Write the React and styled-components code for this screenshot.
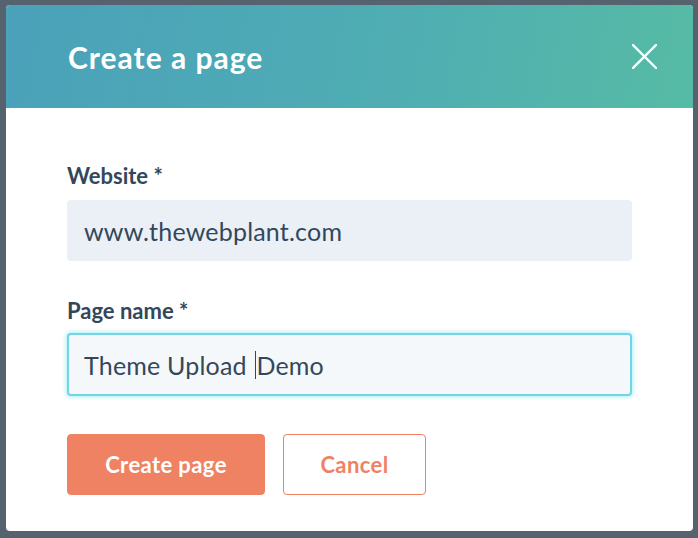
import * as React from 'react';
import styled, { createGlobalStyle } from 'styled-components';

const GlobalStyle = createGlobalStyle`
	html, body {
		margin: 0;
		padding: 0;
		background: #56636f;
	}
	body {
		font-family: Lato, "Noto Sans", sans-serif;
		-webkit-font-smoothing: antialiased;
	}
`;

const Backdrop = styled.div`
	width: 698px;
	height: 538px;
	box-sizing: border-box;
	padding: 5px 5px 7px 6px;
	background: #56636f;
`;

const Modal = styled.div`
	display: flex;
	flex-direction: column;
	width: 687px;
	height: 526px;
	border-radius: 4px;
	overflow: hidden;
	background: #fff;
`;

const Header = styled.div`
	display: flex;
	align-items: center;
	justify-content: space-between;
	height: 103px;
	flex-shrink: 0;
	padding: 0 36px 0 62px;
	box-sizing: border-box;
	background: linear-gradient(100deg, #4aa1ba 0%, #4fadb3 55%, #56bba5 100%);
`;

const Title = styled.h1`
	margin: 0;
	color: #fff;
	font-size: 30px;
	font-weight: 700;
	letter-spacing: 1px;
`;

const CloseButton = styled.button`
	display: flex;
	padding: 0;
	border: 0;
	background: none;
	color: #fff;
	cursor: pointer;
`;

const Body = styled.div`
	display: flex;
	flex-direction: column;
	padding: 55px 61px 36px 61px;
`;

const Field = styled.div`
	display: flex;
	flex-direction: column;
	margin-bottom: ${props => props.last ? '38px' : '37px'};
`;

const Label = styled.label`
	color: #33475b;
	font-size: 22px;
	font-weight: 700;
	line-height: 26px;
	margin-bottom: ${props => props.tight ? '9px' : '11px'};
`;

const Input = styled.div`
	display: flex;
	align-items: center;
	height: ${props => props.focused ? '63px' : '61px'};
	box-sizing: border-box;
	border-radius: 4px;
	padding: 0 ${props => props.focused ? '15px' : '17px'};
	color: #33475b;
	font-size: 25px;
	letter-spacing: 0.2px;
	white-space: pre;
	background: ${props => props.focused ? '#f5f8fa' : '#eaf0f6'};
	border: ${props => props.focused ? '2px solid #74d3e4' : '0'};
	box-shadow: ${props => props.focused ? '0 0 4px 1px rgba(0, 208, 228, 0.35)' : 'none'};
`;

const Caret = styled.span`
	display: inline-block;
	width: 1px;
	height: 28px;
	background: #33475b;
	margin: 0 0 0 2px;
`;

const Actions = styled.div`
	display: flex;
	gap: 18px;
`;

const Button = styled.button`
	height: 61px;
	width: ${props => props.width}px;
	box-sizing: border-box;
	border-radius: 4px;
	font-family: Lato, "Noto Sans", sans-serif;
	font-size: 22px;
	font-weight: 700;
	letter-spacing: 0.4px;
	cursor: pointer;
	border: 1px solid #ef8263;
	background: ${props => props.primary ? '#ef8263' : '#fff'};
	color: ${props => props.primary ? '#fff' : '#ef8263'};
`;

const CloseIcon = () => (
	<svg width="25" height="25" viewBox="0 0 25 25" fill="none">
		<path d="M1 1L24 24M24 1L1 24" stroke="currentColor" strokeWidth="2.4" strokeLinecap="square" />
	</svg>
);

const App = () => {
	return (
		<>
			<GlobalStyle />
			<Backdrop>
				<Modal>
					<Header>
						<Title>Create a page</Title>
						<CloseButton aria-label="Close">
							<CloseIcon />
						</CloseButton>
					</Header>
					<Body>
						<Field>
							<Label>Website *</Label>
							<Input>www.thewebplant.com</Input>
						</Field>
						<Field last>
							<Label tight>Page name *</Label>
							<Input focused>
								Theme Upload <Caret />Demo
							</Input>
						</Field>
						<Actions>
							<Button primary width={198}>Create page</Button>
							<Button width={143}>Cancel</Button>
						</Actions>
					</Body>
				</Modal>
			</Backdrop>
		</>
	);
};

export default App;
